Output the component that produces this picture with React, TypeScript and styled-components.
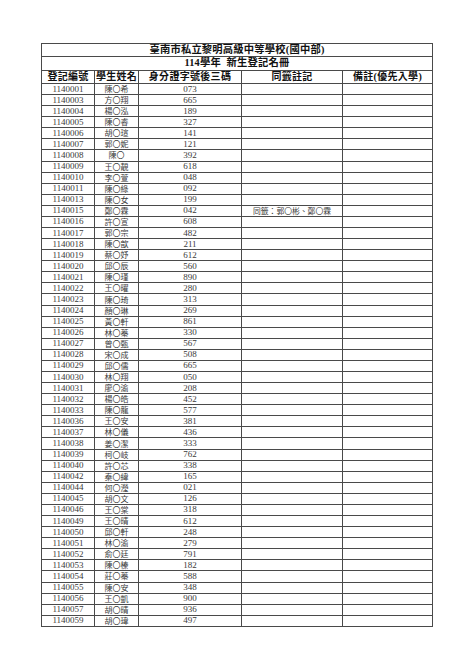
import React from "react";
import styled, { createGlobalStyle } from "styled-components";

const Global = createGlobalStyle`
  html, body { margin: 0; padding: 0; background: #ffffff; }
  body { width: 474px; height: 670px; overflow: hidden; }
`;

const Page = styled.div`
  width: 474px;
  height: 670px;
  padding-top: 43px;
  box-sizing: border-box;
  display: flex;
  justify-content: center;
  align-items: flex-start;
`;

const Sheet = styled.div`
  display: grid;
  grid-template-columns: 52px 43px 102px 100px 89px;
  grid-template-rows: 12.33px 12.33px 12.33px;
  grid-auto-rows: 10.09px;
  gap: 1px;
  background: #4a4a4a;
  border: 1px solid #4a4a4a;
`;

const Cell = styled.div<{ $span?: number }>`
  background: #ffffff;
  grid-column: span ${(p) => p.$span ?? 1};
  display: flex;
  align-items: center;
  justify-content: center;
  overflow: hidden;
  white-space: nowrap;
`;

const TitleText = styled.span`
  font-family: "Liberation Serif", "Noto Sans CJK TC", serif;
  font-weight: 700;
  font-size: 10.3px;
  line-height: 1;
  color: #111;
  letter-spacing: 0.2px;
`;

const HeadText = styled.span`
  font-family: "Liberation Serif", "Noto Sans CJK TC", serif;
  font-weight: 700;
  font-size: 10px;
  line-height: 1;
  color: #111;
  letter-spacing: 0.3px;
`;

const NumText = styled.span`
  font-family: "Liberation Serif", serif;
  font-size: 9px;
  line-height: 1;
  color: #3a3a3a;
`;

const NameText = styled.span`
  font-family: "Noto Sans CJK TC", sans-serif;
  font-size: 8px;
  line-height: 1;
  color: #3a3a3a;
`;

const NoteText = styled(NameText)`
  font-size: 7.8px;
`;

type Row = { id: string; name: string; code: string; note?: string };

const rows: Row[] = [
  { id: "1140001", name: "陳〇希", code: "073" },
  { id: "1140003", name: "方〇翔", code: "665" },
  { id: "1140004", name: "楊〇泓", code: "189" },
  { id: "1140005", name: "陳〇睿", code: "327" },
  { id: "1140006", name: "胡〇瑄", code: "141" },
  { id: "1140007", name: "郭〇妮", code: "121" },
  { id: "1140008", name: "陳〇", code: "392" },
  { id: "1140009", name: "王〇靚", code: "618" },
  { id: "1140010", name: "李〇萱", code: "048" },
  { id: "1140011", name: "陳〇綠", code: "092" },
  { id: "1140013", name: "陳〇女", code: "199" },
  { id: "1140015", name: "鄭〇霖", code: "042", note: "同籤：郭〇彬、鄭〇霖" },
  { id: "1140016", name: "許〇宣", code: "608" },
  { id: "1140017", name: "郭〇宗", code: "482" },
  { id: "1140018", name: "陳〇歆", code: "211" },
  { id: "1140019", name: "蔡〇妤", code: "612" },
  { id: "1140020", name: "邱〇辰", code: "560" },
  { id: "1140021", name: "陳〇瑾", code: "890" },
  { id: "1140022", name: "王〇曜", code: "280" },
  { id: "1140023", name: "陳〇琦", code: "313" },
  { id: "1140024", name: "顏〇琳", code: "269" },
  { id: "1140025", name: "黃〇軒", code: "861" },
  { id: "1140026", name: "林〇蓁", code: "330" },
  { id: "1140027", name: "曾〇甄", code: "567" },
  { id: "1140028", name: "宋〇成", code: "508" },
  { id: "1140029", name: "邱〇儒", code: "665" },
  { id: "1140030", name: "林〇翔", code: "050" },
  { id: "1140031", name: "廖〇渝", code: "208" },
  { id: "1140032", name: "楊〇皓", code: "452" },
  { id: "1140033", name: "陳〇龍", code: "577" },
  { id: "1140036", name: "王〇安", code: "381" },
  { id: "1140037", name: "林〇儀", code: "436" },
  { id: "1140038", name: "姜〇潔", code: "333" },
  { id: "1140039", name: "柯〇岐", code: "762" },
  { id: "1140040", name: "許〇芯", code: "338" },
  { id: "1140042", name: "秦〇緯", code: "165" },
  { id: "1140044", name: "何〇瀅", code: "021" },
  { id: "1140045", name: "胡〇文", code: "126" },
  { id: "1140046", name: "王〇棠", code: "318" },
  { id: "1140049", name: "王〇晴", code: "612" },
  { id: "1140050", name: "邱〇軒", code: "248" },
  { id: "1140051", name: "林〇渝", code: "279" },
  { id: "1140052", name: "俞〇廷", code: "791" },
  { id: "1140053", name: "陳〇榛", code: "182" },
  { id: "1140054", name: "莊〇蓁", code: "588" },
  { id: "1140055", name: "陳〇安", code: "348" },
  { id: "1140056", name: "王〇凱", code: "900" },
  { id: "1140057", name: "胡〇晴", code: "936" },
  { id: "1140059", name: "胡〇瑋", code: "497" },
];

const headers = ["登記編號", "學生姓名", "身分證字號後三碼", "同籤註記", "備註(優先入學)"];

export default function App() {
  return (
    <>
      <Global />
      <Page>
        <Sheet>
          <Cell $span={5}>
            <TitleText>臺南市私立黎明高級中等學校(國中部)</TitleText>
          </Cell>
          <Cell $span={5}>
            <TitleText>114學年&nbsp;&nbsp;新生登記名冊</TitleText>
          </Cell>
          {headers.map((h) => (
            <Cell key={h}>
              <HeadText>{h}</HeadText>
            </Cell>
          ))}
          {rows.map((r) => (
            <React.Fragment key={r.id}>
              <Cell>
                <NumText>{r.id}</NumText>
              </Cell>
              <Cell>
                <NameText>{r.name}</NameText>
              </Cell>
              <Cell>
                <NumText>{r.code}</NumText>
              </Cell>
              <Cell>{r.note ? <NoteText>{r.note}</NoteText> : null}</Cell>
              <Cell />
            </React.Fragment>
          ))}
        </Sheet>
      </Page>
    </>
  );
}
